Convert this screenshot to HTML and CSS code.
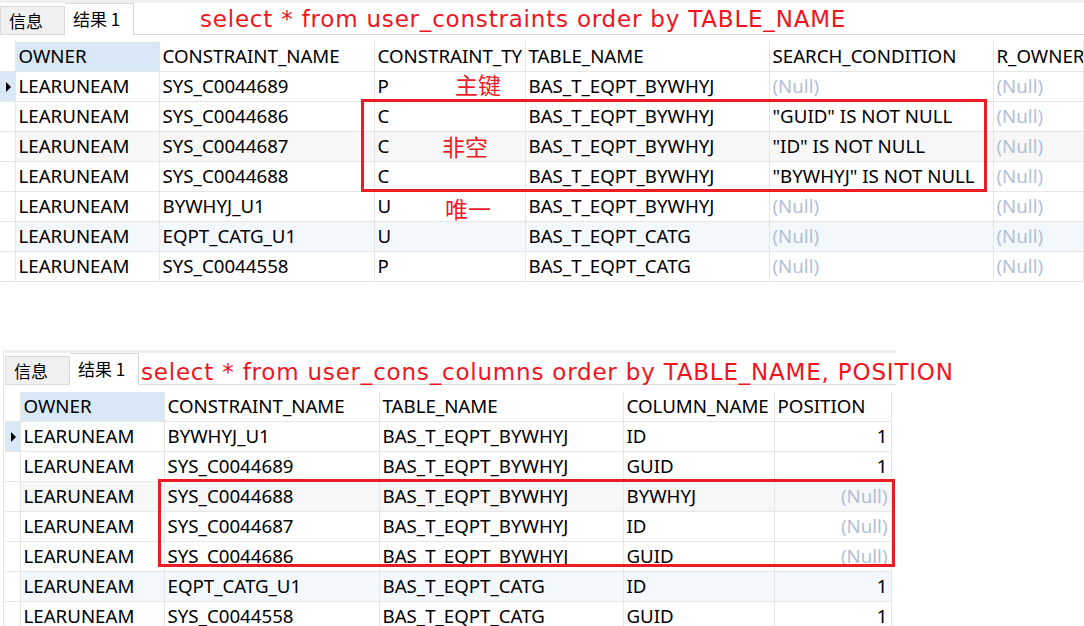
FILE: index.html
```html
<!DOCTYPE html>
<html>
<head>
    <title>user_constraints</title>
    <link rel="stylesheet" href="styles.css">
</head>
<body>

<div class="shot shot-top">
    <div class="tabbar">
        <div class="tab">信息</div>
        <div class="tab active">结果 1</div>
        <div class="sql">select * from user_constraints order by TABLE_NAME</div>
    </div>
    <div class="grid-wrap">
        <table class="grid grid-a">
            <colgroup>
                <col class="c-ind"><col class="c-owner"><col class="c-cname"><col class="c-ctype"><col class="c-tname"><col class="c-cond"><col class="c-rown">
            </colgroup>
            <tr class="head">
                <th class="ind"></th><th class="sel">OWNER</th><th>CONSTRAINT_NAME</th><th>CONSTRAINT_TY</th><th>TABLE_NAME</th><th>SEARCH_CONDITION</th><th>R_OWNER</th>
            </tr>
            <tr>
                <td class="ind cur"><span class="arrow"></span></td><td>LEARUNEAM</td><td>SYS_C0044689</td><td>P</td><td>BAS_T_EQPT_BYWHYJ</td><td class="null">(Null)</td><td class="null">(Null)</td>
            </tr>
            <tr>
                <td class="ind"></td><td>LEARUNEAM</td><td>SYS_C0044686</td><td>C</td><td>BAS_T_EQPT_BYWHYJ</td><td>"GUID" IS NOT NULL</td><td class="null">(Null)</td>
            </tr>
            <tr class="alt">
                <td class="ind"></td><td>LEARUNEAM</td><td>SYS_C0044687</td><td>C</td><td>BAS_T_EQPT_BYWHYJ</td><td>"ID" IS NOT NULL</td><td class="null">(Null)</td>
            </tr>
            <tr>
                <td class="ind"></td><td>LEARUNEAM</td><td>SYS_C0044688</td><td>C</td><td>BAS_T_EQPT_BYWHYJ</td><td>"BYWHYJ" IS NOT NULL</td><td class="null">(Null)</td>
            </tr>
            <tr>
                <td class="ind"></td><td>LEARUNEAM</td><td>BYWHYJ_U1</td><td>U</td><td>BAS_T_EQPT_BYWHYJ</td><td class="null">(Null)</td><td class="null">(Null)</td>
            </tr>
            <tr class="hover">
                <td class="ind"></td><td>LEARUNEAM</td><td>EQPT_CATG_U1</td><td>U</td><td>BAS_T_EQPT_CATG</td><td class="null">(Null)</td><td class="null">(Null)</td>
            </tr>
            <tr>
                <td class="ind"></td><td>LEARUNEAM</td><td>SYS_C0044558</td><td>P</td><td>BAS_T_EQPT_CATG</td><td class="null">(Null)</td><td class="null">(Null)</td>
            </tr>
        </table>
        <span class="note note-pk">主键</span>
        <span class="note note-nn">非空</span>
        <span class="note note-uq">唯一</span>
        <div class="mark mark-a"></div>
    </div>
</div>

<div class="shot shot-bottom">
    <div class="tabbar">
        <div class="tab">信息</div>
        <div class="tab active">结果 1</div>
        <div class="sql">select * from user_cons_columns order by TABLE_NAME, POSITION</div>
    </div>
    <div class="grid-wrap">
        <table class="grid grid-b">
            <colgroup>
                <col class="c-ind"><col class="c-owner"><col class="c-cname"><col class="c-tname"><col class="c-ctype"><col class="c-pos">
            </colgroup>
            <tr class="head">
                <th class="ind"></th><th class="sel">OWNER</th><th>CONSTRAINT_NAME</th><th>TABLE_NAME</th><th>COLUMN_NAME</th><th>POSITION</th>
            </tr>
            <tr>
                <td class="ind cur"><span class="arrow"></span></td><td>LEARUNEAM</td><td>BYWHYJ_U1</td><td>BAS_T_EQPT_BYWHYJ</td><td>ID</td><td class="num">1</td>
            </tr>
            <tr>
                <td class="ind"></td><td>LEARUNEAM</td><td>SYS_C0044689</td><td>BAS_T_EQPT_BYWHYJ</td><td>GUID</td><td class="num">1</td>
            </tr>
            <tr class="alt">
                <td class="ind"></td><td>LEARUNEAM</td><td>SYS_C0044688</td><td>BAS_T_EQPT_BYWHYJ</td><td>BYWHYJ</td><td class="num null">(Null)</td>
            </tr>
            <tr>
                <td class="ind"></td><td>LEARUNEAM</td><td>SYS_C0044687</td><td>BAS_T_EQPT_BYWHYJ</td><td>ID</td><td class="num null">(Null)</td>
            </tr>
            <tr>
                <td class="ind"></td><td>LEARUNEAM</td><td>SYS_C0044686</td><td>BAS_T_EQPT_BYWHYJ</td><td>GUID</td><td class="num null">(Null)</td>
            </tr>
            <tr class="hover">
                <td class="ind"></td><td>LEARUNEAM</td><td>EQPT_CATG_U1</td><td>BAS_T_EQPT_CATG</td><td>ID</td><td class="num">1</td>
            </tr>
            <tr>
                <td class="ind"></td><td>LEARUNEAM</td><td>SYS_C0044558</td><td>BAS_T_EQPT_CATG</td><td>GUID</td><td class="num">1</td>
            </tr>
        </table>
        <div class="mark mark-b"></div>
    </div>
</div>

</body>
</html>
```

FILE: styles.css
```css
body {
    margin: 0;
    background: #fff;
    overflow: hidden;
    font-family: "Noto Sans", "Noto Sans CJK SC", sans-serif;
    color: #000;
}

/* one screenshot = tab bar + result grid */
.shot { position: relative; }
.shot-top { border-top: 3px solid #f0f0f0; }
.shot-bottom {
    margin-top: 68px;
    margin-left: 3px;
    width: 891px;
    border-left: 1px solid #e6e6e6;
    padding-left: 1px;
}
.shot-bottom .tabbar { border-top: 3px solid #f0f0f0; }

.tabbar {
    display: flex;
    align-items: flex-end;
    height: 31px;
    border-bottom: 1px solid #d9d9d9;
}
.tab {
    box-sizing: border-box;
    flex-shrink: 0;
    height: 28px;
    padding: 0 8px;
    font-family: "Noto Sans CJK SC", sans-serif;
    font-size: 17px;
    line-height: 27px;
    white-space: nowrap;
    background: #f0f0f0;
    border: 1px solid #d9d9d9;
    border-bottom: none;
    width: 65px;
}
.tab.active {
    height: 32px;
    margin-bottom: -1px;
    background: #fff;
    width: 69px;
    line-height: 29px;
    border-left: none;
}
.sql {
    align-self: center;
    flex-shrink: 0;
    margin-left: 66px;
    font-family: "DejaVu Sans", sans-serif;
    font-size: 23px;
    letter-spacing: 0.8px;
    color: #f0141e;
    white-space: nowrap;
}
.shot-bottom .sql {
    margin-left: 2px;
    position: relative;
    top: 3px;
    z-index: 2;
}

/* grid */
.grid-wrap {
    position: relative;
    padding-top: 6px;
}
.grid {
    table-layout: fixed;
    border-collapse: collapse;
    font-size: 18.7px;
}
.grid-a { width: 1084px; }
.grid-b { width: 886px; }
.c-ind { width: 15px; }
.c-owner { width: 144px; }
.c-cname { width: 215px; }
.c-ctype { width: 151px; }
.c-tname { width: 244px; }
.c-cond { width: 224px; }
.c-pos { width: 117px; }

.grid th, .grid td {
    height: 27px;
    padding: 0 3px 2px;
    border: 1px solid #e6e6e6;
    border-top: none;
    text-align: left;
    font-weight: normal;
    white-space: nowrap;
    overflow: hidden;
    text-overflow: clip;
    line-height: 27px;
}
.grid th { border-top: 1px solid #fff; }
.grid th.sel { background: #d9e8f6; }
.grid .ind { padding: 0; height: 29px; border-left: none; }
.grid td.cur { background: #d9e8f6; }
.grid tr.alt td { background: #f7f7f7; }
.grid tr.hover td { background: #f3f8fd; }
.grid tr.alt td.ind, .grid tr.hover td.ind { background: #fff; }
.grid td.null { color: #b3bfd6; }
.grid td.num { text-align: right; }

.arrow {
    display: block;
    width: 0;
    height: 0;
    margin-left: 6px;
    border-top: 5px solid transparent;
    border-bottom: 5px solid transparent;
    border-left: 5px solid #000;
}

/* red annotations drawn over the screenshot */
.note {
    position: absolute;
    font-family: "Noto Sans CJK SC", sans-serif;
    font-size: 23px;
    color: #ec1c24;
    line-height: 1;
}
.note-pk { left: 455px; top: 38px; }
.note-nn { left: 442px; top: 100px; }
.note-uq { left: 445px; top: 162px; }

.mark {
    position: absolute;
    border: 3px solid #ec1c24;
    box-sizing: border-box;
}
.mark-a { left: 361px; top: 64px; width: 626px; height: 93px; }
.mark-b { left: 153px; top: 94px; width: 737px; height: 88px; }
```
